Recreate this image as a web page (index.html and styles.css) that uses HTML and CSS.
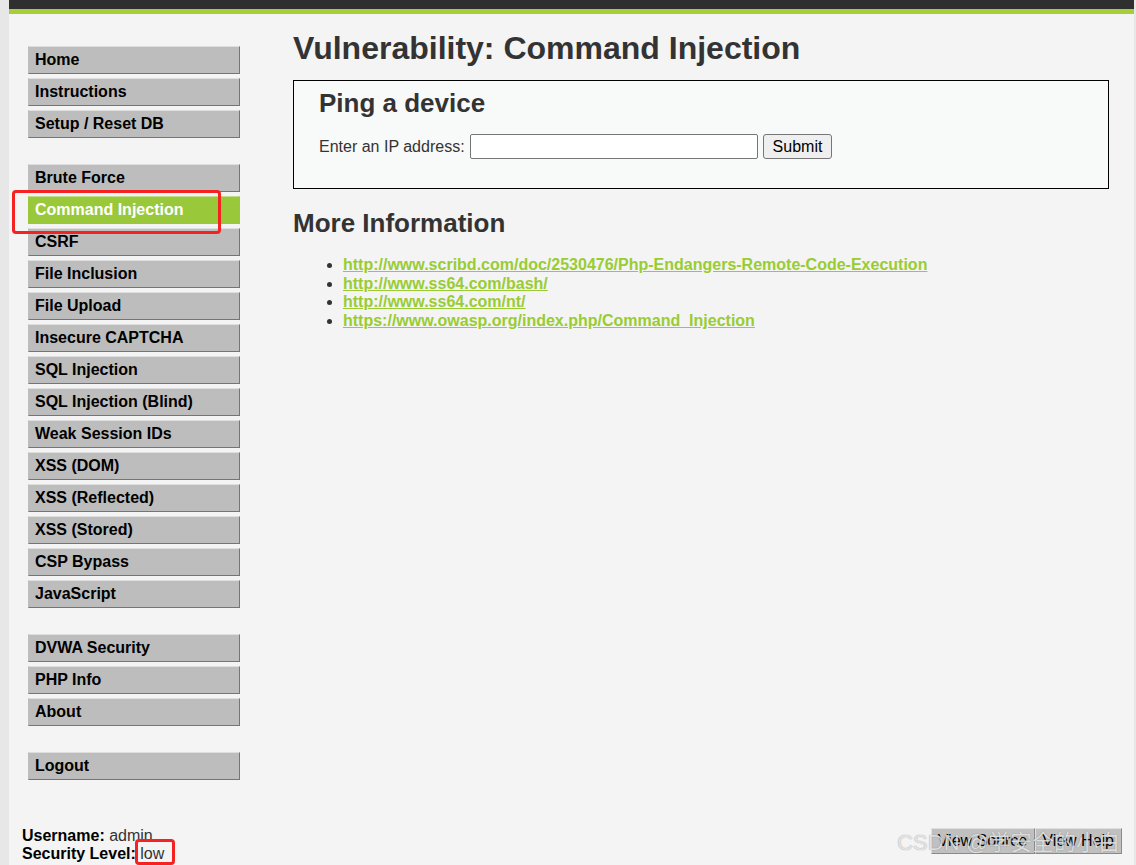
FILE: index.html
```html
<!DOCTYPE html>
<html>
<head>
  <meta charset="utf-8">
  <link rel="stylesheet" href="styles.css">
</head>
<body>
  <div class="page">
    <div class="header"></div>

    <div class="body-row">
      <div class="main-menu">
        <ul class="menu-block">
          <li><a href="#">Home</a></li>
          <li><a href="#">Instructions</a></li>
          <li><a href="#">Setup / Reset DB</a></li>
        </ul>
        <ul class="menu-block">
          <li><a href="#">Brute Force</a></li>
          <li class="selected"><a href="#">Command Injection</a></li>
          <li><a href="#">CSRF</a></li>
          <li><a href="#">File Inclusion</a></li>
          <li><a href="#">File Upload</a></li>
          <li><a href="#">Insecure CAPTCHA</a></li>
          <li><a href="#">SQL Injection</a></li>
          <li><a href="#">SQL Injection (Blind)</a></li>
          <li><a href="#">Weak Session IDs</a></li>
          <li><a href="#">XSS (DOM)</a></li>
          <li><a href="#">XSS (Reflected)</a></li>
          <li><a href="#">XSS (Stored)</a></li>
          <li><a href="#">CSP Bypass</a></li>
          <li><a href="#">JavaScript</a></li>
        </ul>
        <ul class="menu-block">
          <li><a href="#">DVWA Security</a></li>
          <li><a href="#">PHP Info</a></li>
          <li><a href="#">About</a></li>
        </ul>
        <ul class="menu-block">
          <li><a href="#">Logout</a></li>
        </ul>
      </div>

      <div class="main-body">
        <h1>Vulnerability: Command Injection</h1>

        <div class="vulnerable-code">
          <h2>Ping a device</h2>
          <form class="ping-form">
            <span>Enter an IP address:</span>
            <input type="text" class="ip-input">
            <button type="button" class="submit-btn">Submit</button>
          </form>
        </div>

        <h2 class="more-title">More Information</h2>
        <ul class="info-links">
          <li><a href="#">http://www.scribd.com/doc/2530476/Php-Endangers-Remote-Code-Execution</a></li>
          <li><a href="#">http://www.ss64.com/bash/</a></li>
          <li><a href="#">http://www.ss64.com/nt/</a></li>
          <li><a href="#">https://www.owasp.org/index.php/Command_Injection</a></li>
        </ul>
      </div>
    </div>

    <div class="footer">
      <div class="user-info">
        <div><b>Username:</b> admin</div>
        <div><b>Security Level:</b> <span class="level">low</span></div>
      </div>
      <div class="source-buttons">
        <button type="button" class="popup-btn">View Source</button>
        <button type="button" class="popup-btn">View Help</button>
      </div>
    </div>

    <div class="mark mark-menu"></div>
    <div class="mark mark-level"></div>
    <div class="watermark">CSDN @学安全的小白</div>
  </div>
</body>
</html>
```

FILE: styles.css
```css
* {
  margin: 0;
  padding: 0;
  box-sizing: border-box;
}

body {
  background: #e7e7e7;
  font-family: "Liberation Sans", Arial, "Noto Sans CJK SC", sans-serif;
  font-size: 16px;
  color: #333;
  overflow: hidden;
}

.page {
  position: relative;
  margin: 0 2px 0 9px;
  min-height: 865px;
  background: #f4f4f4;
}

.header {
  height: 14px;
  background: #2f2f2f;
  border-bottom: 5px solid #a6ce39;
}

.body-row {
  display: flex;
  align-items: flex-start;
}

/* left menu */
.main-menu {
  width: 231px;
  padding: 32px 0 0 19px;
  flex-shrink: 0;
}

.menu-block {
  list-style: none;
  margin-bottom: 26px;
}

.menu-block:last-child {
  margin-bottom: 0;
}

.menu-block li {
  margin-bottom: 4px;
}

.menu-block li:last-child {
  margin-bottom: 0;
}

.menu-block li a {
  display: block;
  padding: 4px 6px;
  line-height: 18px;
  background: #bdbdbd;
  border: 1px solid #bdbdbd;
  border-top-color: #dedede;
  border-right-color: #6f7583;
  border-bottom-color: #6f7583;
  color: #000;
  font-weight: bold;
  text-decoration: none;
}

.menu-block li.selected a {
  background: #99c93a;
  border-color: #99c93a;
  border-top-color: #c2dd8a;
  color: #fff;
}

/* content */
.main-body {
  flex: 1;
  margin-left: 53px;
  padding: 16px 25px 0 0;
}

h1 {
  font-size: 32px;
  line-height: 37px;
  font-weight: bold;
  color: #333;
  margin-bottom: 13px;
}

h2 {
  font-size: 26px;
  line-height: 30px;
  font-weight: bold;
  color: #333;
}

.vulnerable-code {
  border: 1px solid #000;
  background: #f8f9f9;
  padding: 7px 25px 29px;
}

.vulnerable-code h2 {
  margin-bottom: 16px;
}

.ping-form {
  display: flex;
  align-items: center;
  gap: 5px;
  color: #333;
}

.ip-input {
  width: 288px;
  height: 25px;
  border: 1px solid #767676;
  border-radius: 2px;
  background: #fff;
}

.submit-btn {
  height: 25px;
  padding: 0 9px;
  font-family: inherit;
  font-size: 16px;
  color: #000;
  background: #efefef;
  border: 1px solid #767676;
  border-radius: 3px;
}

.more-title {
  margin-top: 19px;
}

.info-links {
  margin-top: 18px;
  padding-left: 50px;
  line-height: 18.6px;
}

.info-links a {
  color: #99cc33;
  font-weight: bold;
}

/* footer */
.footer {
  display: flex;
  justify-content: space-between;
  align-items: flex-start;
  margin-top: 47px;
  padding: 0 12px 0 13px;
  line-height: 18px;
}

.user-info b {
  color: #000;
}

.source-buttons {
  display: flex;
  margin-top: 1px;
}

.popup-btn {
  height: 26px;
  padding: 0 7px 0 6px;
  font-family: inherit;
  font-size: 16px;
  color: #000;
  background: #c0c0c0;
  border: 1px solid #8a8a8a;
  border-top-color: #e0e0e0;
  border-left-color: #e0e0e0;
}

/* screenshot annotations */
.mark {
  position: absolute;
  border: 3px solid #f52222;
  border-radius: 4px;
}

.mark-menu {
  left: 3px;
  top: 190px;
  width: 209px;
  height: 44px;
}

.mark-level {
  left: 126px;
  top: 839px;
  width: 40px;
  height: 26px;
}

.watermark {
  position: absolute;
  right: 14px;
  top: 829px;
  font-size: 22px;
  line-height: 28px;
  color: rgba(255, 255, 255, 0.75);
  text-shadow: 0 0 1px rgba(0, 0, 0, 0.45);
  pointer-events: none;
}
```
